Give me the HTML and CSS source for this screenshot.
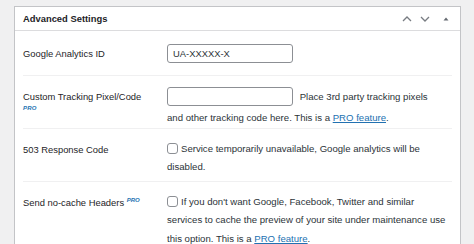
FILE: index.html
```html
<!DOCTYPE html>
<html>
<head>
<meta charset="utf-8">
<link rel="stylesheet" href="styles.css">
</head>
<body>
<div class="page">
  <div class="panel">
    <div class="panel-head">
      <h2 class="panel-title">Advanced Settings</h2>
      <div class="head-actions">
        <svg class="ico" width="12" height="10" viewBox="0 0 12 10"><path d="M2 7 L6 3 L10 7" fill="none" stroke="#787c82" stroke-width="1.3"/></svg>
        <svg class="ico" width="12" height="10" viewBox="0 0 12 10"><path d="M2 3 L6 7 L10 3" fill="none" stroke="#787c82" stroke-width="1.3"/></svg>
        <svg class="ico ico-tri" width="10" height="10" viewBox="0 0 10 10"><path d="M2.5 6.5 L5 3.5 L7.5 6.5 Z" fill="#646970"/></svg>
      </div>
    </div>
    <div class="panel-body">
      <div class="row row-first">
        <div class="label">Google Analytics ID</div>
        <div class="field"><input class="text-input" type="text" value="UA-XXXXX-X"></div>
      </div>
      <div class="row row-second">
        <div class="label">Custom Tracking Pixel/Code<span class="pro-below">PRO</span></div>
        <div class="field desc"><span class="first-line"><input class="text-input" type="text"> Place 3rd party tracking pixels</span><br>and other tracking code here. This is a <a href="#">PRO feature</a>.</div>
      </div>
      <div class="row">
        <div class="label">503 Response Code</div>
        <div class="field desc"><span class="cb"></span>Service temporarily unavailable, Google analytics will be<br>disabled.</div>
      </div>
      <div class="row">
        <div class="label">Send no-cache Headers <sup class="pro-sup">PRO</sup></div>
        <div class="field desc"><span class="cb"></span>If you don't want Google, Facebook, Twitter and similar<br>services to cache the preview of your site under maintenance use<br>this option. This is a <a href="#">PRO feature</a>.</div>
      </div>
    </div>
  </div>
</div>
</body>
</html>
```
FILE: styles.css
```css
html, body {
  margin: 0;
  padding: 0;
  background: #f0f0f1;
  font-family: "Liberation Sans", Arial, sans-serif;
  color: #1d2327;
}
.page {
  padding: 6px 13px 0 14px;
  height: 238px;
  overflow: hidden;
}
.panel {
  background: #fff;
  border: 1px solid #c3c4c7;
  height: 300px;
}
.panel-head {
  display: flex;
  align-items: center;
  justify-content: space-between;
  height: 23px;
  padding: 0 8px;
  border-bottom: 1px solid #dcdcde;
}
.panel-title {
  margin: 0;
  font-size: 9.4px;
  font-weight: bold;
  color: #1d2327;
}
.head-actions {
  display: flex;
  align-items: center;
  gap: 6px;
  margin-right: 1px;
}
.ico { display: block; }
.ico-tri { margin-left: 4px; }
.panel-body {
  padding: 0 8px;
}
.row {
  display: grid;
  grid-template-columns: 144px 286px;
  padding: 11px 0 4px;
  border-bottom: 1px solid #f0f0f1;
  font-size: 9.4px;
  line-height: 18.5px;
}
.row-first {
  padding: 13px 0 11px;
}
.row-second {
  padding: 11px 0 0;
}
.label {
  color: #1d2327;
  line-height: 20px;
}
.pro-below {
  display: block;
  font-size: 6px;
  line-height: 2px;
  font-style: italic;
  font-weight: bold;
  color: #2271b1;
  letter-spacing: 0.2px;
}
.pro-sup {
  font-size: 6px;
  font-style: italic;
  font-weight: bold;
  color: #2271b1;
  vertical-align: 4px;
  line-height: 0;
}
.field {
  color: #2c3338;
  font-size: 9.6px;
  white-space: nowrap;
}
.first-line {
  display: inline-block;
  height: 22px;
  line-height: 19px;
}
.text-input {
  box-sizing: border-box;
  width: 126px;
  height: 19px;
  margin: 0 4px 0 0;
  padding: 0 5px;
  border: 1px solid #8c8f94;
  border-radius: 3px;
  font-family: "Liberation Sans", Arial, sans-serif;
  font-size: 9.4px;
  color: #2c3338;
  vertical-align: top;
  background: #fff;
}
.row-first .field {
  line-height: 19px;
}
.cb {
  display: inline-block;
  box-sizing: border-box;
  width: 11px;
  height: 11px;
  border: 1px solid #8c8f94;
  border-radius: 3px;
  background: #fff;
  vertical-align: -2px;
  margin: 0 3px 0 0;
}
a {
  color: #2271b1;
  text-decoration: underline;
}
```
